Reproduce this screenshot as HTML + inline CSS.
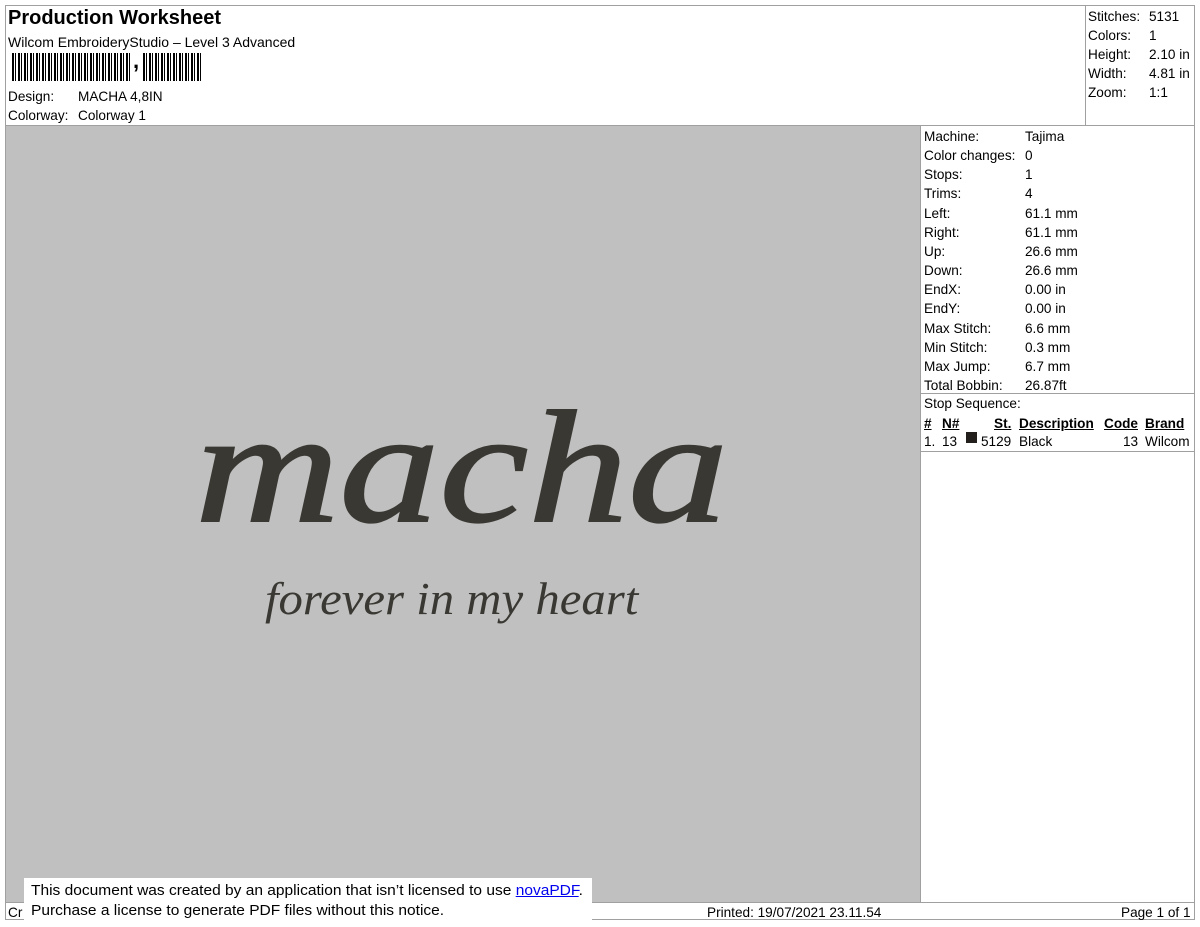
<!DOCTYPE html><html><head><style>
body{margin:0;width:1200px;height:927px;background:#fff;font-family:"Liberation Sans",sans-serif;color:#000;position:relative;overflow:hidden}
.a{position:absolute}
.t{font-size:13.6px;white-space:nowrap}
</style></head><body>
<div class="a" style="left:5px;top:5px;width:1190px;height:915px;border:1px solid #a0a0a0;box-sizing:border-box"></div>
<div class="a" style="left:5px;top:125px;width:1190px;height:1px;background:#a0a0a0"></div>
<div class="a" style="left:1085px;top:5px;width:1px;height:120px;background:#a0a0a0"></div>
<div class="a" style="left:8px;top:7px;font-size:20px;font-weight:bold">Production Worksheet</div>
<div class="a t" style="left:8px;top:34px;font-size:14px">Wilcom EmbroideryStudio – Level 3 Advanced</div>
<div class="a" style="left:12px;top:53px;width:118px;height:28px;background:repeating-linear-gradient(90deg,#000 0 2px,#fff 2px 3px,#000 3px 4px,#fff 4px 6px)"></div>
<div class="a" style="left:133px;top:48px;font-size:22px;font-weight:bold">,</div>
<div class="a" style="left:143px;top:53px;width:58px;height:28px;background:repeating-linear-gradient(90deg,#000 0 2px,#fff 2px 3px,#000 3px 4px,#fff 4px 6px)"></div>
<div class="a t" style="left:8px;top:89px">Design:</div><div class="a t" style="left:78px;top:89px">MACHA 4,8IN</div>
<div class="a t" style="left:8px;top:108px">Colorway:</div><div class="a t" style="left:78px;top:108px">Colorway 1</div>
<div class="a t" style="left:1088px;top:7px;line-height:19px">Stitches:<br>Colors:<br>Height:<br>Width:<br>Zoom:</div>
<div class="a t" style="left:1149px;top:7px;line-height:19px">5131<br>1<br>2.10 in<br>4.81 in<br>1:1</div>
<div class="a" style="left:6px;top:126px;width:914px;height:776px;background:#c0c0c0"></div>
<div class="a" style="left:920px;top:126px;width:1px;height:776px;background:#a0a0a0"></div>
<div class="a t" style="left:924px;top:127px;line-height:19.15px">Machine:<br>Color changes:<br>Stops:<br>Trims:<br>Left:<br>Right:<br>Up:<br>Down:<br>EndX:<br>EndY:<br>Max Stitch:<br>Min Stitch:<br>Max Jump:<br>Total Bobbin:</div>
<div class="a t" style="left:1025px;top:127px;line-height:19.15px">Tajima<br>0<br>1<br>4<br>61.1 mm<br>61.1 mm<br>26.6 mm<br>26.6 mm<br>0.00 in<br>0.00 in<br>6.6 mm<br>0.3 mm<br>6.7 mm<br>26.87ft</div>
<div class="a" style="left:921px;top:393px;width:274px;height:1px;background:#a0a0a0"></div>
<div class="a t" style="left:924px;top:396px">Stop Sequence:</div>
<div class="a t" style="left:924px;top:416px;font-weight:bold;text-decoration:underline">#</div>
<div class="a t" style="left:942px;top:416px;font-weight:bold;text-decoration:underline">N#</div>
<div class="a t" style="left:994px;top:416px;font-weight:bold;text-decoration:underline">St.</div>
<div class="a t" style="left:1019px;top:416px;font-weight:bold;text-decoration:underline">Description</div>
<div class="a t" style="left:1104px;top:416px;font-weight:bold;text-decoration:underline">Code</div>
<div class="a t" style="left:1145px;top:416px;font-weight:bold;text-decoration:underline">Brand</div>
<div class="a t" style="left:924px;top:434px">1.</div><div class="a t" style="left:942px;top:434px">13</div>
<div class="a" style="left:966px;top:432px;width:11px;height:11px;background:#231f1c"></div>
<div class="a t" style="left:981px;top:434px">5129</div><div class="a t" style="left:1019px;top:434px">Black</div>
<div class="a t" style="left:1123px;top:434px">13</div><div class="a t" style="left:1145px;top:434px">Wilcom</div>
<div class="a" style="left:921px;top:451px;width:274px;height:1px;background:#a0a0a0"></div>
<div class="a" style="left:5px;top:902px;width:1190px;height:1px;background:#a0a0a0"></div>
<div class="a t" style="left:8px;top:905px">Cr</div>
<div class="a t" style="left:707px;top:905px">Printed: 19/07/2021 23.11.54</div>
<div class="a t" style="left:1121px;top:905px">Page 1 of 1</div>
<div class="a" style="left:24px;top:878px;width:568px;height:49px;background:#fff"></div>
<div class="a" style="left:31px;top:881px;font-size:14.5px;line-height:20px;white-space:nowrap;transform:scaleX(1.07);transform-origin:left">This document was created by an application that isn’t licensed to use <span style="color:#00e;text-decoration:underline">novaPDF</span>.<br>Purchase a license to generate PDF files without this notice.</div>
<div class="a" style="left:195px;top:375px;font-family:'Liberation Serif',serif;font-style:italic;font-size:160px;color:#3a3833;white-space:nowrap;transform:scaleX(1.25);transform-origin:left;-webkit-text-stroke:2px #3a3833">macha</div>
<div class="a" style="left:265px;top:572px;font-family:'Liberation Serif',serif;font-style:italic;font-size:46px;color:#3a3833;white-space:nowrap;transform:scaleX(1.06);transform-origin:left">forever in my heart</div>
</body></html>
